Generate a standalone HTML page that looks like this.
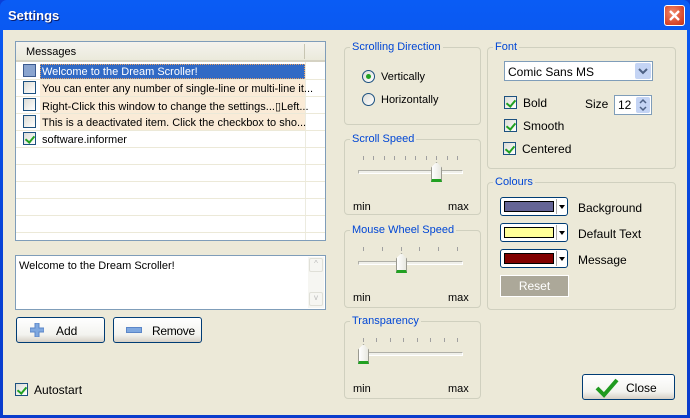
<!DOCTYPE html>
<html><head><meta charset="utf-8"><style>
*{box-sizing:border-box;margin:0;padding:0}
body{width:690px;height:418px;overflow:hidden;font-family:"Liberation Sans",sans-serif;font-size:11px;color:#000;background:#0a3fd8}
.win{position:absolute;left:0;top:0;width:690px;height:418px;background:linear-gradient(#0a5cf5,#0842d6 60%,#0a3ccc);border-radius:7px 7px 0 0}
.title{position:absolute;left:8px;top:8px;color:#fff;font-weight:bold;font-size:13px;text-shadow:1px 1px #0a1f70}
.xbtn{position:absolute;left:664px;top:5px;width:21px;height:21px;border:1px solid #fff;border-radius:3px;background:radial-gradient(circle at 40% 35%,#f08a6a,#d8452a 70%,#c0381c);}
.body{position:absolute;left:3px;top:30px;width:684px;height:385px;background:#ece9d8}
.a{position:absolute}
.grp{position:absolute;border:1px solid #d0d0bf;border-radius:4px}
.grp>.lg{position:absolute;left:5px;top:-7px;background:#ece9d8;color:#0046d5;padding:0 2px}
.cb{position:absolute;width:13px;height:13px;border:1px solid #1c5180;background:linear-gradient(135deg,#dcdcd6,#fff)}
.cb.ck::after{content:"";position:absolute;left:3px;top:1px;width:4px;height:7px;border:solid #21a121;border-width:0 2px 2px 0;transform:rotate(40deg)}
.btn{position:absolute;border:1px solid #003c74;border-radius:3px;background:linear-gradient(#fff,#f3f3ef 70%,#d6d0c5);}
.track{position:absolute;height:4px;border:1px solid #b0b0a8;border-bottom-color:#fff;border-right-color:#fff;background:#f0f0ea}
.thumb{position:absolute;width:11px;height:20px;background:linear-gradient(90deg,#fff,#e8e8e0);border:1px solid #9a9a90;border-bottom:3px solid #21a121;clip-path:polygon(50% 0,100% 28%,100% 100%,0 100%,0 28%)}
.tick{position:absolute;width:1px;height:4px;background:#a0a0a0}
.sw{position:absolute;width:68px;height:19px;border:1px solid #003c74;border-radius:3px;background:#fff}
.sw i{position:absolute;left:3px;top:3px;width:50px;height:11px;border:1px solid #000}
.sw b{position:absolute;right:1px;top:1px;width:10px;height:15px;border-left:1px solid #aaa}
.sw b::after{content:"";position:absolute;left:2px;top:6px;border:3px solid transparent;border-top:4px solid #000}
.rad{position:absolute;width:13px;height:13px;border-radius:50%;border:1px solid #1c5180;background:linear-gradient(135deg,#dcdcd6,#fff)}
</style></head><body>
<div class="win">
<div class="title">Settings</div>
<div class="xbtn"><svg width="19" height="19" viewBox="0 0 19 19"><path d="M5 5L14 14M14 5L5 14" stroke="#fff" stroke-width="2.4"/></svg></div>
</div>
<div class="body"></div>

<!-- list -->
<div class="a" style="left:15px;top:41px;width:311px;height:200px;border:1px solid #7f9db9;background:#fff;overflow:hidden">
 <div class="a" style="left:0;top:0;width:309px;height:20px;background:linear-gradient(#f4f3ee,#ebeadb);border-bottom:2px solid #d5d2c3"></div>
 <div class="a" style="left:288px;top:2px;width:1px;height:15px;background:#c7c5b2"></div>
 <div class="a" style="left:10px;top:4px">Messages</div>
 <div class="a" style="left:289px;top:20px;width:1px;height:180px;background:#ecebe0"></div>
 <div class="a" style="left:0;top:37px;width:309px;height:1px;background:#ece9d8"></div>
 <div class="a" style="left:24px;top:38px;width:265px;height:50px;background:#faebd7"></div>
 <div class="a" style="left:0;top:54px;width:309px;height:1px;background:#ece9d8"></div>
 <div class="a" style="left:0;top:71px;width:309px;height:1px;background:#ece9d8"></div>
 <div class="a" style="left:0;top:88px;width:309px;height:1px;background:#ece9d8"></div>
 <div class="a" style="left:0;top:105px;width:309px;height:1px;background:#ece9d8"></div>
 <div class="a" style="left:0;top:122px;width:309px;height:1px;background:#ece9d8"></div>
 <div class="a" style="left:0;top:139px;width:309px;height:1px;background:#ece9d8"></div>
 <div class="a" style="left:0;top:156px;width:309px;height:1px;background:#ece9d8"></div>
 <div class="a" style="left:0;top:173px;width:309px;height:1px;background:#ece9d8"></div>
 <div class="a" style="left:0;top:190px;width:309px;height:1px;background:#ece9d8"></div>
 <div class="a" style="left:24px;top:22px;width:265px;height:15px;background:#316ac5;border:1px dotted #e8a060"></div>
 <div class="a" style="left:26px;top:24px;color:#fff">Welcome to the Dream Scroller!</div>
 <div class="a" style="left:26px;top:41px">You can enter any number of single-line or multi-line it...</div>
 <div class="a" style="left:26px;top:58px">Right-Click this window to change the settings...▯Left...</div>
 <div class="a" style="left:26px;top:75px">This is a deactivated item. Click the checkbox to sho...</div>
 <div class="a" style="left:26px;top:92px">software.informer</div>
</div>
<div class="cb" style="left:23px;top:64px;background:#8aa4cf;border-color:#3c5a8f"></div>
<div class="cb" style="left:23px;top:81px"></div>
<div class="cb" style="left:23px;top:98px"></div>
<div class="cb" style="left:23px;top:115px"></div>
<div class="cb ck" style="left:23px;top:132px"></div>

<!-- textarea -->
<div class="a" style="left:15px;top:255px;width:311px;height:55px;border:1px solid #7f9db9;background:#fff">
 <div class="a" style="left:3px;top:4px">Welcome to the Dream Scroller!</div>
 <div class="a" style="left:292px;top:1px;width:16px;height:51px;background:#f6f6f2"></div>
 <div class="a" style="left:293px;top:2px;width:14px;height:14px;border:1px solid #e0e0d8;border-radius:2px;color:#bbb;font-size:8px;text-align:center">^</div>
 <div class="a" style="left:293px;top:36px;width:14px;height:14px;border:1px solid #e0e0d8;border-radius:2px;color:#bbb;font-size:8px;text-align:center">v</div>
</div>

<div class="btn" style="left:16px;top:317px;width:89px;height:26px">
 <svg class="a" style="left:13px;top:5px" width="14" height="14"><path d="M5 0h4v5h5v4H9v5H5V9H0V5h5z" fill="#7fa8e0" stroke="#5b86c8"/></svg>
 <div class="a" style="left:39px;top:6px;font-size:12px">Add</div></div>
<div class="btn" style="left:113px;top:317px;width:89px;height:26px">
 <svg class="a" style="left:12px;top:9px" width="16" height="6"><rect x="0.5" y="0.5" width="15" height="5" fill="#7fa8e0" stroke="#5b86c8"/></svg>
 <div class="a" style="left:38px;top:6px;font-size:12px;letter-spacing:-0.3px">Remove</div></div>

<div class="cb ck" style="left:15px;top:383px"></div>
<div class="a" style="left:34px;top:383px;font-size:12px">Autostart</div>

<!-- Scrolling Direction -->
<div class="grp" style="left:344px;top:47px;width:137px;height:78px"><span class="lg">Scrolling Direction</span></div>
<div class="rad" style="left:362px;top:70px"><div class="a" style="left:3px;top:3px;width:5px;height:5px;border-radius:50%;background:#21a121"></div></div>
<div class="a" style="left:381px;top:71px">Vertically</div>
<div class="rad" style="left:362px;top:93px"></div>
<div class="a" style="left:381px;top:94px">Horizontally</div>

<!-- sliders -->
<div class="grp" style="left:344px;top:139px;width:137px;height:76px"><span class="lg">Scroll Speed</span></div>
<div class="grp" style="left:344px;top:230px;width:137px;height:78px"><span class="lg">Mouse Wheel Speed</span></div>
<div class="grp" style="left:344px;top:321px;width:137px;height:78px"><span class="lg">Transparency</span></div>

<div class="track" style="left:358px;top:170px;width:105px"></div>
<div class="tick" style="left:363px;top:156px"></div><div class="tick" style="left:373px;top:156px"></div><div class="tick" style="left:384px;top:156px"></div><div class="tick" style="left:394px;top:156px"></div><div class="tick" style="left:405px;top:156px"></div><div class="tick" style="left:415px;top:156px"></div><div class="tick" style="left:426px;top:156px"></div><div class="tick" style="left:436px;top:156px"></div><div class="tick" style="left:447px;top:156px"></div><div class="tick" style="left:457px;top:156px"></div>
<div class="thumb" style="left:431px;top:162px"></div>
<div class="a" style="left:353px;top:201px">min</div><div class="a" style="left:448px;top:201px">max</div>

<div class="track" style="left:358px;top:261px;width:105px"></div>
<div class="tick" style="left:363px;top:247px"></div><div class="tick" style="left:382px;top:247px"></div><div class="tick" style="left:401px;top:247px"></div><div class="tick" style="left:419px;top:247px"></div><div class="tick" style="left:438px;top:247px"></div><div class="tick" style="left:457px;top:247px"></div>
<div class="thumb" style="left:396px;top:253px"></div>
<div class="a" style="left:353px;top:292px">min</div><div class="a" style="left:448px;top:292px">max</div>

<div class="track" style="left:358px;top:352px;width:105px"></div>
<div class="tick" style="left:363px;top:338px"></div><div class="tick" style="left:376px;top:338px"></div><div class="tick" style="left:390px;top:338px"></div><div class="tick" style="left:403px;top:338px"></div><div class="tick" style="left:417px;top:338px"></div><div class="tick" style="left:430px;top:338px"></div><div class="tick" style="left:444px;top:338px"></div><div class="tick" style="left:457px;top:338px"></div>
<div class="thumb" style="left:358px;top:344px"></div>
<div class="a" style="left:353px;top:383px">min</div><div class="a" style="left:448px;top:383px">max</div>

<!-- Font -->
<div class="grp" style="left:487px;top:47px;width:189px;height:122px"><span class="lg">Font</span></div>
<div class="a" style="left:504px;top:61px;width:149px;height:20px;border:1px solid #7f9db9;background:#fff">
 <div class="a" style="left:3px;top:3px;font-size:12px">Comic Sans MS</div>
 <div class="a" style="right:1px;top:1px;width:16px;height:16px;background:#c4d4f4;border-radius:2px"><svg width="16" height="16"><path d="M4 6l4 4 4-4" stroke="#4d6185" stroke-width="2" fill="none"/></svg></div>
</div>
<div class="cb ck" style="left:504px;top:96px"></div><div class="a" style="left:523px;top:96px;font-size:12px">Bold</div>
<div class="cb ck" style="left:504px;top:119px"></div><div class="a" style="left:523px;top:119px;font-size:12px">Smooth</div>
<div class="cb ck" style="left:503px;top:142px"></div><div class="a" style="left:522px;top:142px;font-size:12px">Centered</div>
<div class="a" style="left:585px;top:97px;font-size:12px">Size</div>
<div class="a" style="left:614px;top:95px;width:38px;height:20px;border:1px solid #7f9db9;background:#fff">
 <div class="a" style="left:3px;top:2px;font-size:12px">12</div>
 <div class="a" style="right:1px;top:1px;width:14px;height:16px;background:#c4d4f4;border-radius:2px"><svg width="14" height="16"><path d="M4 6l3-3 3 3M4 10l3 3 3-3" stroke="#4d6185" stroke-width="1.5" fill="none"/></svg></div>
</div>

<!-- Colours -->
<div class="grp" style="left:487px;top:182px;width:189px;height:128px"><span class="lg">Colours</span></div>
<div class="sw" style="left:500px;top:197px"><i style="background:#646496"></i><b></b></div><div class="a" style="left:578px;top:201px;font-size:12px">Background</div>
<div class="sw" style="left:500px;top:223px"><i style="background:#ffff99"></i><b></b></div><div class="a" style="left:578px;top:227px;font-size:12px">Default Text</div>
<div class="sw" style="left:500px;top:249px"><i style="background:#800000"></i><b></b></div><div class="a" style="left:578px;top:253px;font-size:12px">Message</div>
<div class="a" style="left:500px;top:275px;width:69px;height:22px;background:#aca899;border:1px solid #fff;color:#fff;text-align:center;line-height:20px;font-size:12px">Reset</div>

<div class="btn" style="left:582px;top:374px;width:93px;height:26px">
 <svg class="a" style="left:12px;top:3px" width="24" height="20"><path d="M2 10l7 7L22 2" stroke="#1f9a1f" stroke-width="4" fill="none"/></svg>
 <div class="a" style="left:43px;top:6px;font-size:12px">Close</div></div>
</body></html>
